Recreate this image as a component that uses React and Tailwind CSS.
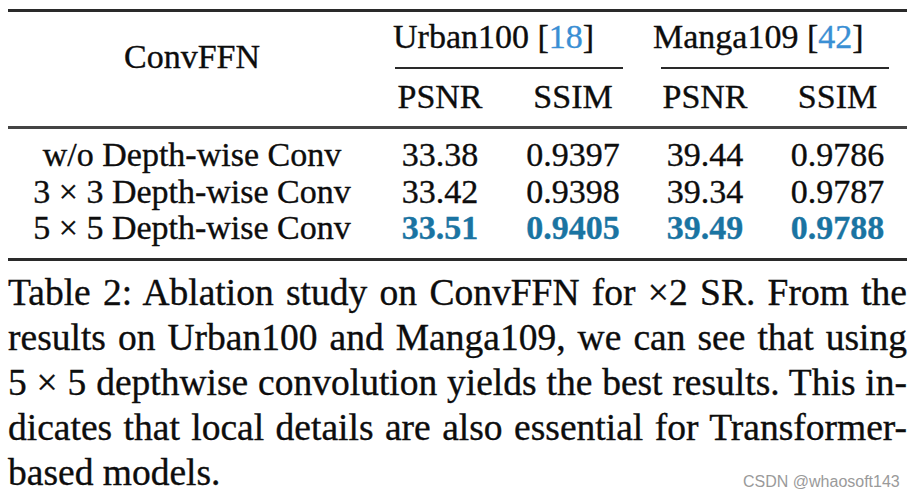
const serif = { fontFamily: '"Liberation Serif", "Times New Roman", serif' };

const rows = [
  { label: "w/o Depth-wise Conv", vals: ["33.38", "0.9397", "39.44", "0.9786"], best: false },
  { label: "3 × 3 Depth-wise Conv", vals: ["33.42", "0.9398", "39.34", "0.9787"], best: false },
  { label: "5 × 5 Depth-wise Conv", vals: ["33.51", "0.9405", "39.49", "0.9788"], best: true },
];

const captionLines = [
  "Table 2: Ablation study on ConvFFN for ×2 SR. From the",
  "results on Urban100 and Manga109, we can see that using",
  "5 × 5 depthwise convolution yields the best results. This in-",
  "dicates that local details are also essential for Transformer-",
];

const App = () => {
  return (
    <div
      className="relative w-[916px] h-[498px] bg-white overflow-hidden text-[#0d0d0d] [-webkit-text-stroke:0.35px_currentColor]"
      style={serif}
    >
      <div className="ml-2 w-[899px] pt-[9px]">
        {/* top rule */}
        <div className="h-[3px] bg-[#2a2a2a]" />

        {/* header */}
        <div className="grid grid-cols-[368px_128px_138px_126px_139px] text-[34px]">
          <div className="row-span-2 pt-[20px] text-center leading-[49px]">ConvFFN</div>
          <div className="col-span-2 flex flex-col">
            <div className="pl-[17px] leading-[49px]">
              Urban100 [<span className="text-[#3a8fd4]">18</span>]
            </div>
            <div className="mt-[6px] mx-[19px] h-[2px] bg-[#2a2a2a]" />
          </div>
          <div className="col-span-2 flex flex-col">
            <div className="pl-[11px] leading-[49px]">
              Manga109 [<span className="text-[#3a8fd4]">42</span>]
            </div>
            <div className="mt-[6px] ml-[19px] mr-[18px] h-[2px] bg-[#2a2a2a]" />
          </div>
          <div className="text-center leading-[55px]">PSNR</div>
          <div className="text-center leading-[55px]">SSIM</div>
          <div className="text-center leading-[55px]">PSNR</div>
          <div className="text-center leading-[55px]">SSIM</div>
        </div>

        {/* mid rule */}
        <div className="mt-[2px] h-[3px] bg-[#444]" />

        {/* body */}
        <div className="pt-[8px] pb-[11px] text-[34px]">
          {rows.map((r) => (
            <div key={r.label} className="grid grid-cols-[368px_128px_138px_126px_139px] leading-[36.5px]">
              <div className="text-center">{r.label}</div>
              {r.vals.map((v, i) => (
                <div
                  key={i}
                  className={r.best ? "text-center font-bold text-[#1a74a2]" : "text-center"}
                >
                  {v}
                </div>
              ))}
            </div>
          ))}
        </div>

        {/* bottom rule */}
        <div className="h-[3px] bg-[#2a2a2a]" />

        {/* caption */}
        <div className="pt-[9px] text-[37.5px]">
          {captionLines.map((line) => (
            <div key={line} className="h-[45px] leading-[45px] text-justify [text-align-last:justify] whitespace-nowrap">
              {line}
            </div>
          ))}
          <div className="h-[45px] leading-[45px]">based models.</div>
        </div>
      </div>

      <div
        className="absolute left-[743px] top-[472px] text-[16px] leading-[20px] text-[#9a9a9a] [-webkit-text-stroke:0px]"
        style={{ fontFamily: '"Liberation Sans", Arial, sans-serif' }}
      >
        CSDN @whaosoft143
      </div>
    </div>
  );
};

export default App;
